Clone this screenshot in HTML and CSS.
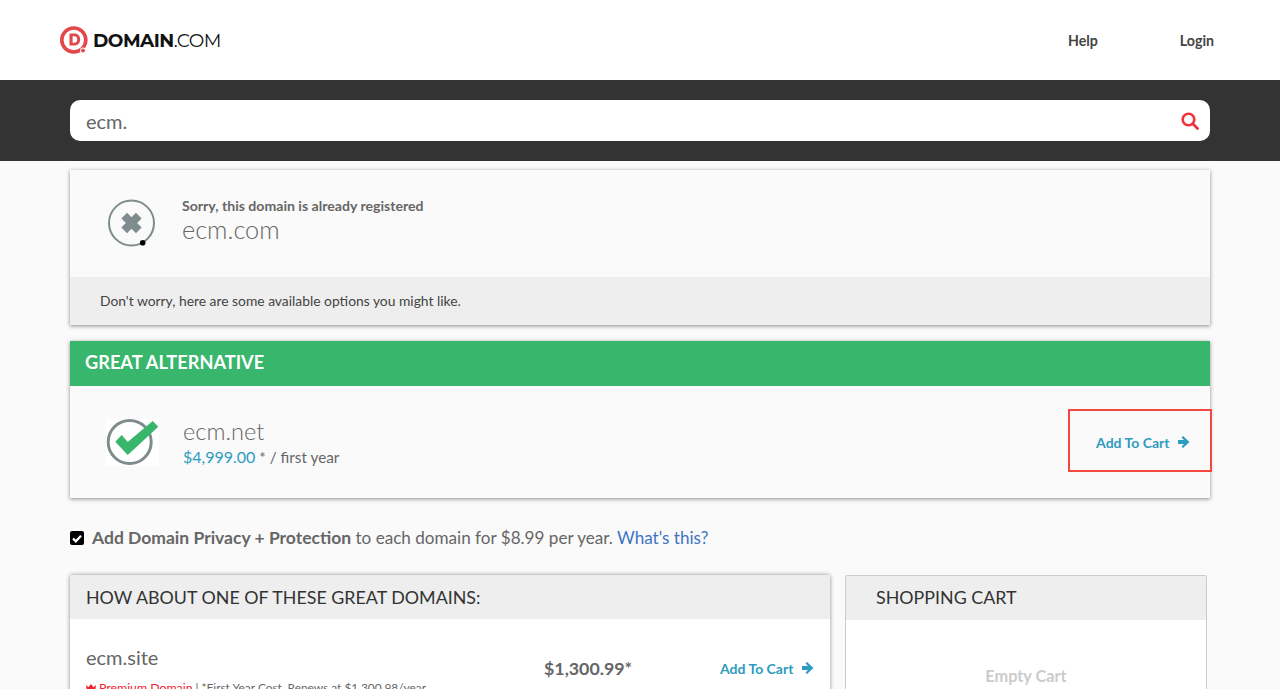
FILE: index.html
```html
<!DOCTYPE html>
<html lang="en">
<head>
    <meta charset="UTF-8">
    <meta name="viewport" content="width=device-width, initial-scale=1.0">
    <title>Domain.com - Search Results</title>
    <link rel="stylesheet" href="styles.css">
</head>
<body>
<header class="site-header">
    <a class="logo">
        <svg class="logo__mark" width="28" height="28" viewBox="0 0 28 28">
            <circle cx="13.800" cy="14" r="12" fill="none" stroke="#e2474b" stroke-width="3.600"/>
            <path d="M9.500 7.500h4.900c3.600 0 5.800 2.600 5.800 6s-2.200 6-5.800 6H9.500z M12.600 10.200v6.600h1.700c2 0 3-1.400 3-3.300s-1-3.300-3-3.300z" fill="#e2474b" fill-rule="evenodd"/>
            <circle cx="23" cy="24.500" r="2.900" fill="#fff"/>
            <circle cx="23" cy="24.500" r="1.900" fill="#e2474b"/>
        </svg>
        <span class="logo__name">DOMAIN</span><span class="logo__tld">.COM</span>
    </a>
    <nav class="site-nav">
        <a>Help</a>
        <a>Login</a>
    </nav>
</header>

<section class="search-band">
    <div class="search-box">
        <span class="search-box__text">ecm.</span>
        <svg width="18" height="18" viewBox="0 0 18 18">
            <circle cx="7.500" cy="7.500" r="5.800" fill="none" stroke="#f0323c" stroke-width="2.600"/>
            <path d="M11.800 11.800L16.500 16.500" stroke="#f0323c" stroke-width="2.800" stroke-linecap="round"/>
        </svg>
    </div>
</section>

<main class="content">
    <section class="card card--taken">
        <div class="taken">
            <svg class="taken__icon" width="50" height="50" viewBox="0 0 50 50">
                <circle cx="24.500" cy="25" r="22.500" fill="none" stroke="#7f8c8d" stroke-width="2"/>
                <path d="M17.200 17.700L31.800 32.300M31.800 17.700L17.200 32.300" fill="none" stroke="#7f8c8d" stroke-width="8"/>
                <circle cx="35.700" cy="44.700" r="2.800" fill="#000"/>
            </svg>
            <div>
                <p class="taken__note">Sorry, this domain is already registered</p>
                <p class="taken__domain">ecm.com</p>
            </div>
        </div>
        <div class="taken__footer">Don't worry, here are some available options you might like.</div>
    </section>

    <section class="card card--alt">
        <h2 class="alt__title">GREAT ALTERNATIVE</h2>
        <div class="alt__body">
            <div class="alt__icon">
                <svg width="53" height="47" viewBox="0 0 53 47">
                    <rect width="53" height="47" fill="#fff"/>
                    <circle cx="23.700" cy="23" r="21.500" fill="none" stroke="#7f8c8d" stroke-width="3"/>
                    <path d="M9.300 22.700L15.700 16L21.700 23L46.700 2L52.300 7.700L21.700 36z" fill="#38b66c"/>
                </svg>
            </div>
            <div class="alt__info">
                <p class="alt__domain">ecm.net</p>
                <p class="alt__price"><span class="price">$4,999.00</span> * / first year</p>
            </div>
            <a class="add-link add-link--alt">Add To Cart
                <svg width="12" height="12" viewBox="0 0 12 12"><path d="M0 4h6L3.500 1.500 5 0l6.500 6L5 12l-1.500-1.500L6 8H0z" fill="#2d9cbf"/></svg>
            </a>
            <div class="highlight"></div>
        </div>
    </section>

    <label class="privacy">
        <span class="privacy__box">
            <svg width="10" height="9" viewBox="0 0 10 9"><path d="M1 4.500l2.800 2.800L9 1.700" fill="none" stroke="#fff" stroke-width="2.200"/></svg>
        </span>
        <span><b class="privacy__lead">Add Domain Privacy + Protection</b> to each domain for $8.99 per year. <a class="privacy__link">What's this?</a></span>
    </label>

    <div class="columns">
        <section class="panel panel--domains">
            <h3 class="panel__title">HOW ABOUT ONE OF THESE GREAT DOMAINS:</h3>
            <div class="domain-row">
                <div class="domain-row__info">
                    <p class="domain-row__name">ecm.site</p>
                    <p class="domain-row__meta">
                        <svg width="10" height="8" viewBox="0 0 10 8"><path d="M0 1l2.500 2.200L5 0l2.500 3.200L10 1 9 8H1z" fill="#f0202c"/></svg>
                        <span class="premium">Premium Domain</span> | *First Year Cost, Renews at $1,300.98/year
                    </p>
                </div>
                <div class="domain-row__price">$1,300.99*</div>
                <a class="add-link">Add To Cart
                    <svg width="12" height="12" viewBox="0 0 12 12"><path d="M0 4h6L3.500 1.500 5 0l6.500 6L5 12l-1.500-1.500L6 8H0z" fill="#2d9cbf"/></svg>
                </a>
            </div>
        </section>
        <aside class="panel panel--cart">
            <h3 class="panel__title panel__title--cart">SHOPPING CART</h3>
            <p class="cart-empty">Empty Cart</p>
        </aside>
    </div>
</main>
</body>
</html>
```

FILE: styles.css
```css
html, body {
    height: 689px;
    overflow: hidden;
}

body {
    margin: 0;
    background-color: #fafafa;
    font-family: Lato, "Open Sans", sans-serif;
    color: #666;
}

p, h2, h3 {
    margin: 0;
}

.site-header {
    height: 80px;
    background-color: #fff;
    display: flex;
    align-items: center;
    justify-content: space-between;
    padding: 0 66px 0 60px;
}

.logo {
    display: flex;
    align-items: center;
    font-family: Montserrat, "Open Sans", sans-serif;
    font-size: 18.500px;
    color: #111;
    letter-spacing: -0.5px;
}

.logo__mark {
    margin-right: 5px;
}

.logo__name {
    font-weight: 700;
}

.logo__tld {
    font-weight: 400;
}

.site-nav {
    display: flex;
    gap: 82px;
    font-size: 14.200px;
    font-weight: 700;
    color: #444;
}

.search-band {
    height: 81px;
    background-color: #333;
    padding: 20px 70px;
    box-sizing: border-box;
}

.search-box {
    height: 41px;
    background-color: #fff;
    border-radius: 10px;
    display: flex;
    align-items: center;
    justify-content: space-between;
    padding: 0 11px 0 16px;
}

.search-box__text {
    font-size: 20px;
    color: #666;
}

.content {
    padding: 9px 70px 0;
}

.card {
    background-color: #fafafa;
    box-shadow: 0 1px 4px rgba(0, 0, 0, 0.45);
}

.taken {
    height: 107px;
    display: flex;
    align-items: flex-start;
    padding: 28px 0 0 37px;
    box-sizing: border-box;
}

.taken__icon {
    margin-right: 25px;
}

.taken__note {
    font-size: 14.100px;
    font-weight: 700;
    color: #666;
    line-height: 15px;
}

.taken__domain {
    font-size: 25.300px;
    font-weight: 300;
    line-height: 33px;
    color: #666;
}

.taken__footer {
    height: 48px;
    background-color: #eee;
    padding-left: 30px;
    font-size: 13.850px;
    line-height: 48px;
    color: #444;
}

.card--alt {
    margin-top: 16px;
}

.alt__title {
    height: 45px;
    background-color: #38b66c;
    color: #fff;
    font-size: 18.200px;
    font-weight: 700;
    line-height: 43px;
    padding-left: 15px;
}

.alt__body {
    position: relative;
    height: 112px;
    display: flex;
    align-items: center;
    padding: 0 20px 0 36px;
}

.alt__icon {
    width: 53px;
    height: 47px;
    margin-right: 24px;
}

.alt__info {
    flex: 1;
    padding-top: 2px;
}

.alt__domain {
    font-size: 23.600px;
    font-weight: 300;
    line-height: 28px;
    color: #666;
}

.alt__price {
    font-size: 15.300px;
    line-height: 24px;
    color: #666;
}

.price {
    font-size: 16px;
    color: #2d9cbf;
}

.add-link {
    display: flex;
    align-items: center;
    gap: 8.500px;
    font-size: 14px;
    font-weight: 700;
    color: #2d9cbf;
    white-space: nowrap;
}

.highlight {
    position: absolute;
    left: 998px;
    top: 23px;
    width: 140px;
    height: 59px;
    border: 2px solid #f44840;
}

.privacy {
    display: flex;
    align-items: center;
    margin-top: 28px;
    font-size: 17.100px;
    line-height: 24px;
    color: #666;
}

.privacy__lead {
    font-size: 17.500px;
}

.privacy__box {
    width: 14px;
    height: 14px;
    background-color: #000;
    border-radius: 2px;
    display: flex;
    align-items: center;
    justify-content: center;
    margin-right: 8px;
}

.privacy__link {
    color: #3b74c4;
}

.columns {
    display: flex;
    gap: 15px;
    margin-top: 25px;
}

.panel {
    background-color: #fff;
    border-radius: 2px;
}

.panel--domains {
    width: 760px;
    box-shadow: 0 0 4px rgba(0, 0, 0, 0.45);
}

.panel--cart {
    width: 362px;
    height: 300px;
    box-sizing: border-box;
    border: 1px solid #ccc;
}

.panel__title {
    height: 44px;
    background-color: #eee;
    font-size: 17.850px;
    font-weight: 400;
    line-height: 44px;
    color: #333;
    padding-left: 16px;
}

.panel__title--cart {
    padding-left: 30px;
    line-height: 42px;
}

.domain-row {
    display: flex;
    align-items: flex-start;
    padding: 24px 16px 0;
}

.domain-row__info {
    width: 458px;
}

.domain-row__name {
    font-size: 20px;
    line-height: 28px;
    color: #666;
}

.domain-row__meta {
    font-size: 11.900px;
    line-height: 16px;
    margin-top: 9px;
    color: #666;
}

.premium {
    font-size: 12.300px;
    color: #f0202c;
}

.domain-row__price {
    width: 176px;
    margin-top: 11px;
    font-size: 17.800px;
    font-weight: 700;
    line-height: 28px;
    color: #666;
}

.domain-row .add-link {
    height: 28px;
    margin-top: 11px;
}

.cart-empty {
    margin-top: 46px;
    text-align: center;
    font-size: 16.300px;
    font-weight: 700;
    color: #ccc;
}
```
